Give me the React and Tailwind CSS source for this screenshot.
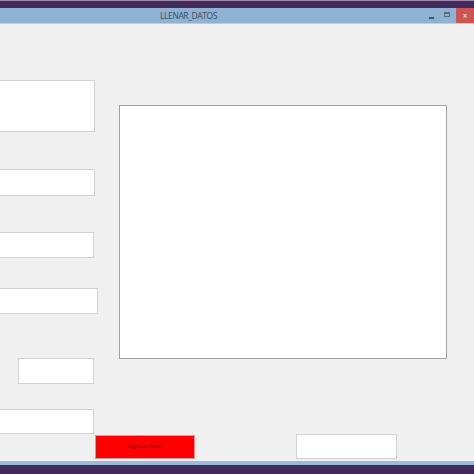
import React from "react";

const field = "bg-white border border-[#d2d2d2]";

export default function App() {
  return (
    <div
      className="w-[474px] h-[474px] flex flex-col overflow-hidden bg-[#f0f0f0]"
      style={{ fontFamily: '"Open Sans", "Noto Sans", sans-serif' }}
    >
      {/* window frame top */}
      <div className="h-[8px] bg-[#43295c] border-t border-[#9c8aa6]" />
      {/* title bar */}
      <div className="h-[16px] bg-[#8fb1d2] flex items-center relative border-b border-[#b9cde0]">
        <div className="absolute left-[160px] top-[1px] text-[8.5px] leading-[14px] tracking-[-0.4px] text-[#3a4b62]">
          LLENAR_DATOS
        </div>
        <div className="ml-auto flex items-center h-full">
          <div className="w-[5px] h-[2px] bg-[#44546a] mt-[5px] mr-[10px]" />
          <div className="w-[6px] h-[5px] border border-[#5a6a7e] border-t-2 mr-[6px] -mt-[2px]" />
          <div className="w-[18px] h-full bg-[#cc5454] flex items-center justify-center text-[#f4dede] text-[8px] leading-none font-bold">
            ×
          </div>
        </div>
      </div>
      {/* client area */}
      <div className="h-[437px] flex flex-col">
        <div className="flex">
          <div className="w-[98px] flex flex-col">
            <div className={`${field} border-l-0 mt-[56px] w-[95px] h-[52px]`} />
            <div className={`${field} border-l-0 mt-[37px] w-[95px] h-[27px]`} />
            <div className={`${field} border-l-0 mt-[36px] w-[94px] h-[26px]`} />
            <div className={`${field} border-l-0 mt-[30px] w-[98px] h-[26px]`} />
            <div className={`${field} mt-[44px] ml-[18px] w-[76px] h-[26px]`} />
            <div className={`${field} border-l-0 mt-[25px] w-[94px] h-[25px]`} />
          </div>
          <div className="ml-[21px] mt-[81px] w-[328px] h-[254px] bg-white border border-[#a3a3a3]" />
        </div>
        <div className="flex">
          <button className="ml-[95px] mt-[1px] w-[100px] h-[24px] bg-[#ff0000] border border-[#c8a0a0] text-[5px] text-[#6a0808] flex items-center justify-center">
            Ingresar Datos
          </button>
          <div className={`${field} ml-[101px] w-[101px] h-[25px]`} />
        </div>
      </div>
      {/* window frame bottom */}
      <div className="h-[4px] bg-[#9ebad4]" />
      <div className="h-[9px] bg-[#43295c]" />
    </div>
  );
}
